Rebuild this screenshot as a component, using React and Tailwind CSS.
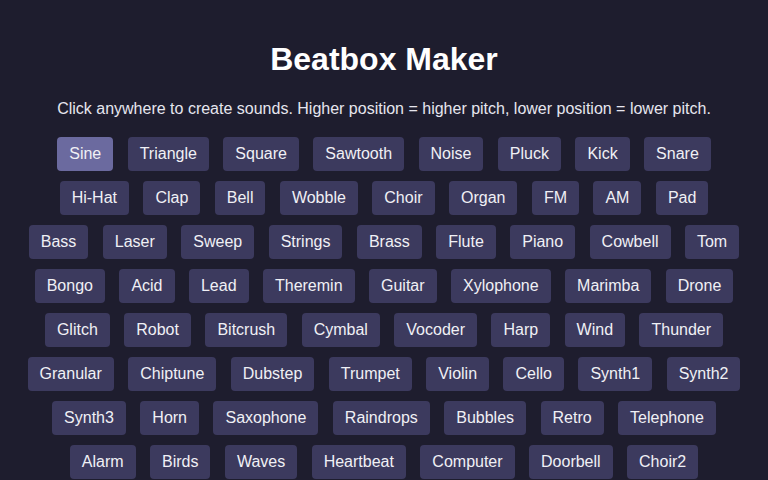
const SOUNDS = [
  'Sine', 'Triangle', 'Square', 'Sawtooth', 'Noise', 'Pluck', 'Kick', 'Snare',
  'Hi-Hat', 'Clap', 'Bell', 'Wobble', 'Choir', 'Organ', 'FM', 'AM', 'Pad',
  'Bass', 'Laser', 'Sweep', 'Strings', 'Brass', 'Flute', 'Piano', 'Cowbell', 'Tom',
  'Bongo', 'Acid', 'Lead', 'Theremin', 'Guitar', 'Xylophone', 'Marimba', 'Drone',
  'Glitch', 'Robot', 'Bitcrush', 'Cymbal', 'Vocoder', 'Harp', 'Wind', 'Thunder',
  'Granular', 'Chiptune', 'Dubstep', 'Trumpet', 'Violin', 'Cello', 'Synth1', 'Synth2',
  'Synth3', 'Horn', 'Saxophone', 'Raindrops', 'Bubbles', 'Retro', 'Telephone',
  'Alarm', 'Birds', 'Waves', 'Heartbeat', 'Computer', 'Doorbell', 'Choir2',
];

export default function App() {
  const active = 'Sine';

  return (
    <div className="min-h-screen bg-[#1e1d2e] p-5 text-center text-white font-['Liberation_Sans',Arial,sans-serif]">
      <h1 className="mt-[21.44px] mb-[21.44px] text-[32px] font-bold leading-[37px]">Beatbox Maker</h1>
      <p className="mb-[14px] text-base leading-[18.4px] text-[#e6e6ee]">
        Click anywhere to create sounds. Higher position = higher pitch, lower position = lower pitch.
      </p>
      <div className="flex flex-wrap justify-center gap-x-[4.45px]">
        {SOUNDS.map(name => (
          <button
            key={name}
            className={
              'm-[5px] rounded-[4px] px-3 py-2 text-base leading-[18px] text-[#f0f0f5] ' +
              (name === active ? 'bg-[#6b6a9f]' : 'bg-[#3c3a5e]')
            }
          >
            {name}
          </button>
        ))}
      </div>
    </div>
  );
}
